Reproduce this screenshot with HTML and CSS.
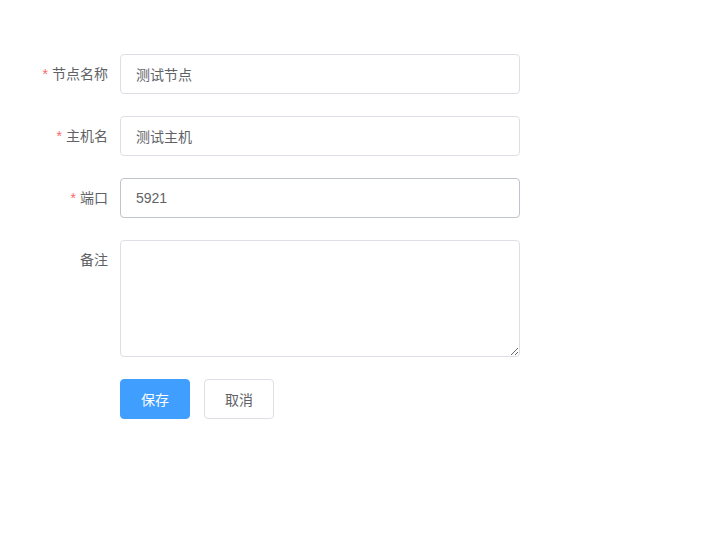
FILE: index.html
```html
<!DOCTYPE html>
<html lang="zh-CN">
<head>
<meta charset="utf-8">
<title>节点</title>
<link rel="stylesheet" href="styles.css">
</head>
<body>
<form class="form">
  <div class="form-item">
    <label class="label is-required">节点名称</label>
    <div class="content"><input class="input" type="text" value="测试节点"></div>
  </div>
  <div class="form-item">
    <label class="label is-required">主机名</label>
    <div class="content"><input class="input" type="text" value="测试主机"></div>
  </div>
  <div class="form-item">
    <label class="label is-required">端口</label>
    <div class="content"><input class="input input-hover" type="text" value="5921"></div>
  </div>
  <div class="form-item">
    <label class="label">备注</label>
    <div class="content"><textarea class="textarea"></textarea></div>
  </div>
  <div class="form-item">
    <div class="label"></div>
    <div class="content buttons">
      <button type="button" class="btn btn-primary">保存</button>
      <button type="button" class="btn">取消</button>
    </div>
  </div>
</form>
</body>
</html>
```
FILE: styles.css
```css
* { box-sizing: border-box; }
html, body { margin: 0; padding: 0; background: #fff; }
body {
  font-family: "Liberation Sans", "Noto Sans CJK SC", sans-serif;
  font-size: 14px;
  color: #606266;
}
.form {
  width: 500px;
  padding: 54px 0 0 20px;
}
.form-item {
  display: flex;
  margin-bottom: 22px;
}
.label {
  width: 100px;
  flex: none;
  text-align: right;
  padding-right: 12px;
  line-height: 40px;
  font-size: 14px;
  color: #606266;
}
.label.is-required::before {
  content: "*";
  color: #f56c6c;
  margin-right: 4px;
}
.content {
  width: 400px;
}
.input {
  display: block;
  width: 400px;
  height: 40px;
  border: 1px solid #dcdfe6;
  border-radius: 4px;
  padding: 0 15px;
  font: inherit;
  font-size: 14px;
  color: #606266;
  outline: none;
  background: #fff;
}
.input-hover { border-color: #c0c4cc; }
.textarea {
  display: block;
  width: 400px;
  height: 117px;
  border: 1px solid #dcdfe6;
  border-radius: 4px;
  padding: 5px 15px;
  font: inherit;
  color: #606266;
  outline: none;
  resize: vertical;
  margin: 0;
}
.buttons {
  display: flex;
  gap: 14px;
}
.btn {
  width: 70px;
  height: 40px;
  border: 1px solid #dcdfe6;
  border-radius: 4px;
  background: #fff;
  color: #606266;
  font: inherit;
  font-size: 14px;
  padding: 0;
  cursor: pointer;
}
.btn-primary {
  background: #409eff;
  border-color: #409eff;
  color: #fff;
}
```
